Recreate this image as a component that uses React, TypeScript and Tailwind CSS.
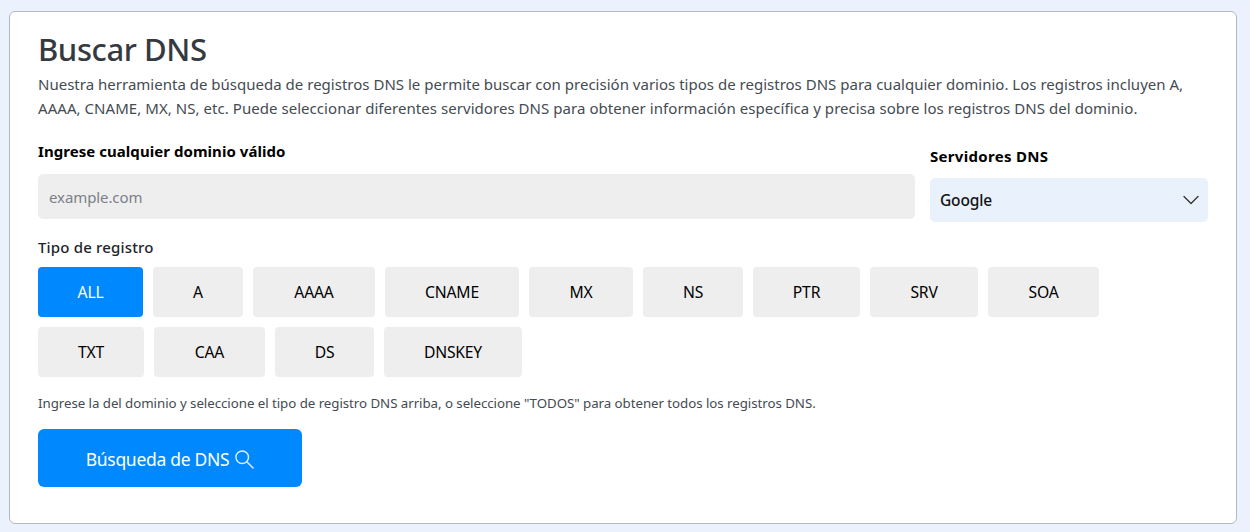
const row1 = [
  { t: "ALL", w: "w-[105px]", on: true },
  { t: "A", w: "w-[90px]" },
  { t: "AAAA", w: "w-[122px]" },
  { t: "CNAME", w: "w-[134px]" },
  { t: "MX", w: "w-[104px]" },
  { t: "NS", w: "w-[100px]" },
  { t: "PTR", w: "w-[107px]" },
  { t: "SRV", w: "w-[108px]" },
  { t: "SOA", w: "w-[111px]" },
];
const row2 = [
  { t: "TXT", w: "w-[106px]" },
  { t: "CAA", w: "w-[111px]" },
  { t: "DS", w: "w-[99px]" },
  { t: "DNSKEY", w: "w-[138px]" },
];

function TypeButton({ t, w, on }: { t: string; w: string; on?: boolean }) {
  return (
    <button
      className={`${w} h-[50px] rounded-[4px] pt-[2px] text-[15.7px] tracking-[-0.2px] ${on ? "bg-[#0089ff] text-white" : "bg-[#eeeeee] text-black"}`}
    >
      {t}
    </button>
  );
}

export default function App() {
  return (
    <div className="h-[532px] bg-[#ebf1fd] pt-[11px] pl-[9px] pr-[13px] font-['Noto_Sans','Open_Sans',sans-serif]">
      <div className="h-[513px] rounded-[6px] border border-[#b4b8c4] bg-white pl-[28px] pr-[28px] pt-[16px]">
        <h1 className="text-[31px] leading-[42px] font-medium tracking-[-0.4px] text-[#343a40]">Buscar DNS</h1>
        <p className="mt-[2px] text-[15px] leading-[24px] text-[#444b52]">
          <span className="block tracking-[0.01px]">
            Nuestra herramienta de búsqueda de registros DNS le permite buscar con precisión varios tipos de registros DNS para cualquier dominio. Los registros incluyen A,
          </span>
          <span className="block tracking-[0.05px]">
            AAAA, CNAME, MX, NS, etc. Puede seleccionar diferentes servidores DNS para obtener información específica y precisa sobre los registros DNS del dominio.
          </span>
        </p>
        <div className="mt-[20px] flex items-start gap-[15px]">
          <div className="w-[877px]">
            <label className="block text-[15px] leading-[22px] font-bold tracking-[0.05px] text-black">Ingrese cualquier dominio válido</label>
            <div className="mt-[12px] flex h-[45px] items-center rounded-[5px] bg-[#eeeeee] pl-[11px] pt-[2px] text-[15px] tracking-[-0.1px] text-[#7b8188]">example.com</div>
          </div>
          <div className="mt-[5px] w-[278px]">
            <label className="block text-[15px] leading-[22px] font-bold tracking-[0.3px] text-black">Servidores DNS</label>
            <div className="mt-[11px] flex h-[44px] items-center justify-between rounded-[5px] bg-[#e9f1fc] pl-[10px] pr-[9px] text-[15.5px] font-medium tracking-[-0.15px] text-[#111]">
              <span className="pt-[1px]">Google</span>
              <svg viewBox="0 0 16 16" fill="none" stroke="#333" strokeWidth={1.3} strokeLinecap="round" strokeLinejoin="round" className="mb-[1px] h-[16px] w-[16px]">
                <path d="M1 4.5 L8 11.5 L15 4.5" />
              </svg>
            </div>
          </div>
        </div>
        <div className="mt-[14px] text-[15px] leading-[22px] font-medium tracking-[0.17px] text-[#212529]">Tipo de registro</div>
        <div className="mt-[9px] flex gap-[10px]">
          {row1.map((b) => (
            <TypeButton key={b.t} {...b} />
          ))}
        </div>
        <div className="mt-[10px] flex gap-[10px]">
          {row2.map((b) => (
            <TypeButton key={b.t} {...b} />
          ))}
        </div>
        <p className="mt-[16px] text-[13.3px] leading-[20px] tracking-[-0.05px] text-[#444b52]">
          Ingrese la del dominio y seleccione el tipo de registro DNS arriba, o seleccione "TODOS" para obtener todos los registros DNS.
        </p>
        <button className="mt-[16px] flex h-[58px] w-[264px] items-center justify-center gap-[6px] rounded-[6px] bg-[#0089ff] text-[17.5px] tracking-[-0.3px] text-white">
          <span className="pt-[2px]">Búsqueda de DNS</span>
          <svg viewBox="0 0 20 20" fill="none" stroke="#dcecff" strokeWidth={1.5} strokeLinecap="round" className="mt-[3px] h-[19px] w-[19px]">
            <circle cx="7.6" cy="7.6" r="6.6" />
            <path d="M12.4 12.4 L19 19" />
          </svg>
        </button>
      </div>
    </div>
  );
}
